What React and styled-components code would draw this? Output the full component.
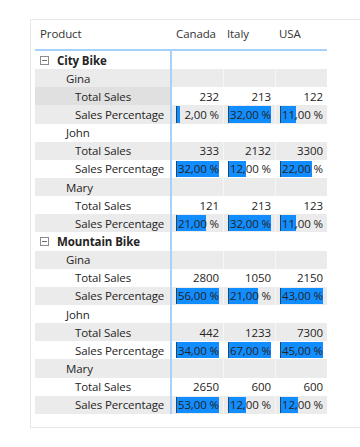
import React from "react";
import styled, { createGlobalStyle } from "styled-components";

const countries = ["Canada", "Italy", "USA"];

const products = [
  {
    name: "City Bike",
    people: [
      { name: "Gina", sales: [232, 213, 122], pct: [2, 32, 11] },
      { name: "John", sales: [333, 2132, 3300], pct: [32, 12, 22] },
      { name: "Mary", sales: [121, 213, 123], pct: [21, 32, 11] },
    ],
  },
  {
    name: "Mountain Bike",
    people: [
      { name: "Gina", sales: [2800, 1050, 2150], pct: [56, 21, 43] },
      { name: "John", sales: [442, 1233, 7300], pct: [34, 67, 45] },
      { name: "Mary", sales: [2650, 600, 600], pct: [53, 12, 12] },
    ],
  },
];

// bars hit full width at 30 %
const BAR_MAX = 30;

const flattenRows = () => {
  const rows = [];
  products.forEach((product) => {
    rows.push({ kind: "product", label: product.name });
    product.people.forEach((person) => {
      rows.push({ kind: "person", label: person.name });
      rows.push({ kind: "total", label: "Total Sales", values: person.sales });
      rows.push({ kind: "pct", label: "Sales Percentage", values: person.pct });
    });
  });
  return rows;
};

const formatPct = (v) => `${v.toFixed(2).replace(".", ",")} %`;

const CollapseIcon = () => (
  <svg width="9" height="9" viewBox="0 0 9 9">
    <rect x="0.5" y="0.5" width="8" height="8" fill="none" stroke="#8c8c8c" />
    <line x1="2" y1="4.5" x2="7" y2="4.5" stroke="#6e6e6e" />
  </svg>
);

const App = () => {
  const rows = flattenRows();
  return (
    <>
      <GlobalStyle />
      <Panel>
        <Table>
          <HeaderRow>
            <HeaderCell>Product</HeaderCell>
            {countries.map((c) => (
              <HeaderCell key={c} $value>
                {c}
              </HeaderCell>
            ))}
          </HeaderRow>
          {rows.map((row, i) => (
            <Row key={i} $banded={i % 2 === 1}>
              <LabelCell $kind={row.kind} $hovered={i === 2}>
                {row.kind === "product" && <CollapseIcon />}
                {row.label}
              </LabelCell>
              {countries.map((c, ci) => (
                <ValueCell key={c} $first={ci === 0}>
                  {row.kind === "pct" && (
                    <Bar
                      $first={ci === 0}
                      style={{
                        width: `calc((100% - 9px) * ${Math.min(
                          row.values[ci] / BAR_MAX,
                          1
                        )})`,
                      }}
                    />
                  )}
                  {row.values && (
                    <ValueText>
                      {row.kind === "pct"
                        ? formatPct(row.values[ci])
                        : row.values[ci]}
                    </ValueText>
                  )}
                </ValueCell>
              ))}
            </Row>
          ))}
        </Table>
      </Panel>
    </>
  );
};

const GlobalStyle = createGlobalStyle`
  body {
    margin: 0;
    background: #ffffff;
    overflow: hidden;
    font-family: "Segoe UI", "Open Sans", "Noto Sans", sans-serif;
  }
`;

const Panel = styled.div`
  margin: 19px 0 0 30px;
  border: 1px solid #e8e8e8;
  border-right: none;
  padding: 0 0 13px 4px;
`;

const Table = styled.div`
  width: 292px;
  font-size: 11.5px;
  letter-spacing: -0.1px;
  color: #252423;
`;

const HeaderRow = styled.div`
  display: grid;
  grid-template-columns: 137px 51px 52px 52px;
  height: 29px;
  border-bottom: 2px solid #a6d1fb;
`;

const HeaderCell = styled.div`
  display: flex;
  align-items: center;
  padding: 0 0 2px ${(p) => (p.$value ? "4px" : "5px")};
  color: #333333;
  white-space: nowrap;
`;

const Row = styled.div`
  display: grid;
  grid-template-columns: 137px 51px 52px 52px;
  height: 18.15px;
  background: ${(p) => (p.$banded ? "#ebebeb" : "transparent")};
`;

const indents = { product: "5px", person: "31px", total: "40px", pct: "40px" };

const LabelCell = styled.div`
  display: flex;
  align-items: center;
  gap: 8px;
  padding-left: ${(p) => indents[p.$kind]};
  border-right: 2px solid #a6d1fb;
  font-weight: ${(p) => (p.$kind === "product" ? 700 : 400)};
  background: ${(p) => (p.$hovered ? "#e0e0e0" : "transparent")};
  white-space: nowrap;
`;

const ValueCell = styled.div`
  position: relative;
  display: flex;
  align-items: center;
  justify-content: flex-end;
  padding: 0 4px 0 ${(p) => (p.$first ? "4px" : "5px")};
  border-left: ${(p) => (p.$first ? "none" : "1px solid rgba(255,255,255,0.55)")};
`;

const Bar = styled.div`
  position: absolute;
  top: 1px;
  bottom: 1px;
  left: ${(p) => (p.$first ? "4px" : "4px")};
  background: #118dff;
  border-left: 1px solid #20476b;
`;

const ValueText = styled.span`
  position: relative;
  white-space: nowrap;
`;

export default App;
